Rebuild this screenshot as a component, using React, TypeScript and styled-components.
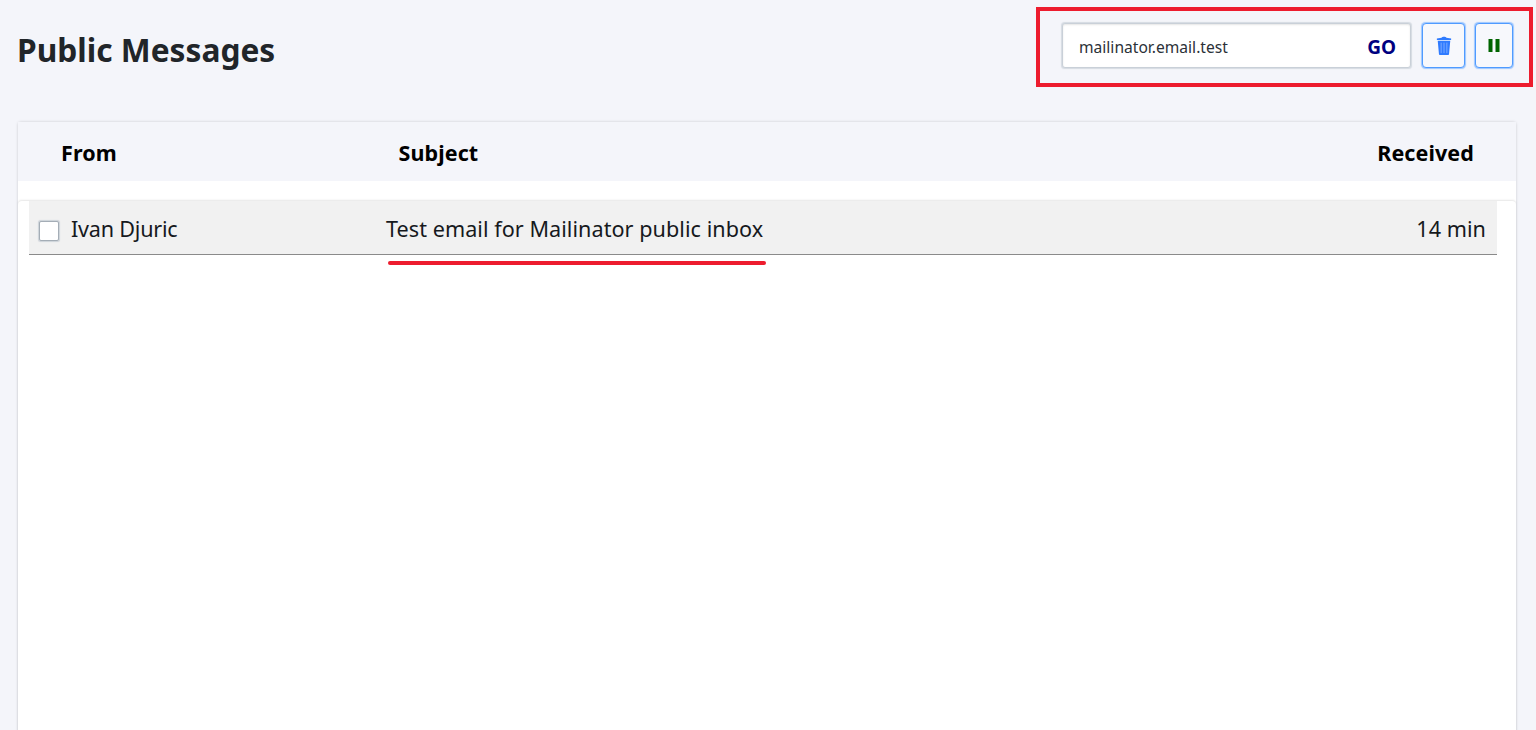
import React from "react";
import styled, { createGlobalStyle } from "styled-components";

const Global = createGlobalStyle`
  html, body { margin: 0; padding: 0; height: 730px; overflow: hidden; background: #f4f5fa; }
  * { box-sizing: border-box; }
`;

const Page = styled.div`
  height: 730px;
  overflow: hidden;
  background: #f4f5fa;
  font-family: "Noto Sans", "Open Sans", "Liberation Sans", sans-serif;
  color: #212529;
`;

const TopBar = styled.header`
  display: flex;
  align-items: flex-start;
  justify-content: space-between;
  padding: 7px 3px 0 17px;
  height: 122px;
`;

const Title = styled.h1`
  margin: 23px 0 0;
  font-size: 31.7px;
  line-height: 40px;
  font-weight: 700;
`;

const Highlight = styled.div`
  display: flex;
  align-items: flex-start;
  width: 497px;
  height: 80px;
  padding: 12px 0 0 22px;
  border: 4px solid #ed1c2e;
`;

const SearchBox = styled.div`
  display: flex;
  align-items: center;
  justify-content: space-between;
  width: 349px;
  height: 45px;
  padding: 2px 14px 0 16px;
  margin-right: 11px;
  background: #fff;
  border: 1px solid #c9d0d8;
  border-radius: 3px;
  box-shadow: inset 0 1px 2px rgba(0, 0, 0, 0.1), 0 0 1px 0.5px #d5dbe2;
`;

const SearchText = styled.span`
  font-size: 15.6px;
  color: #2b3138;
`;

const Go = styled.span`
  font-size: 19px;
  font-weight: 700;
  color: #000080;
`;

const IconButton = styled.button<{ $w: number }>`
  display: flex;
  align-items: center;
  justify-content: center;
  width: ${(p) => p.$w}px;
  height: 45px;
  margin-right: 10px;
  padding: 0;
  background: #f7f8fc;
  border: 1px solid #4f9bff;
  border-radius: 4px;
  box-shadow: 0 0 1px 0.5px #9cc6ff;
`;

const Card = styled.section`
  position: relative;
  margin: 0 20px 0 18px;
  height: 620px;
  background: #fff;
  border-radius: 3px 3px 0 0;
  box-shadow: 0 0 3px rgba(0, 0, 0, 0.18);
`;

const HeadRow = styled.div`
  display: grid;
  grid-template-columns: 337.5px 1fr auto;
  align-items: center;
  height: 59px;
  padding: 2px 42px 0 43px;
  background: #f4f5fa;
  font-size: 21.5px;
  font-weight: 700;
  letter-spacing: 0.1px;
  color: #000;
`;

const Spacer = styled.div`
  height: 20px;
  background: #fff;
`;

const Body = styled.div`
  position: relative;
  height: 540px;
  padding: 0 19px 0 11px;
  background: #fff;
  border-radius: 4px 4px 0 0;
  box-shadow: 0 -1px 2px rgba(0, 0, 0, 0.1);
`;

const Row = styled.div`
  display: grid;
  grid-template-columns: 347px 1fr auto;
  align-items: center;
  height: 54px;
  padding: 2px 11px 0 10px;
  background: #f1f1f1;
  border-bottom: 1px solid #8a8a8a;
  font-size: 21.6px;
  letter-spacing: 0.05px;
  color: #16191d;
`;

const Sender = styled.div`
  display: flex;
  align-items: center;
  gap: 12px;
`;

const SenderName = styled.span`
  letter-spacing: -0.22px;
`;

const Check = styled.span`
  width: 20px;
  height: 20px;
  margin-top: 5px;
  background: #fff;
  border: 1px solid #a4adb6;
  border-radius: 2px;
  box-shadow: 0 0 1px 0.5px #cdd3d9;
`;

const Underline = styled.div`
  position: absolute;
  left: 370px;
  top: 60px;
  width: 378px;
  height: 4px;
  background: #ed1c2e;
  border-radius: 2px;
`;

export default function App() {
  return (
    <Page>
      <Global />
      <TopBar>
        <Title>Public Messages</Title>
        <Highlight>
          <SearchBox>
            <SearchText>mailinator.email.test</SearchText>
            <Go>GO</Go>
          </SearchBox>
          <IconButton $w={43} aria-label="Delete">
            <svg width="16" height="19" viewBox="0 0 16 20">
              <path d="M5.500 1.800C6 .5 10 .5 10.500 1.800L15.500 2.500V4.200H.5V2.500z" fill="#2f7bff" />
              <path d="M1.400 5h13.200l-1.300 14.200a.9.9 0 0 1-.9.8H3.600a.9.9 0 0 1-.9-.8z" fill="#2f7bff" />
              <path d="M5 7v11M8 7v11M11 7v11" stroke="#7eacff" strokeWidth="1" />
            </svg>
          </IconButton>
          <IconButton $w={38} aria-label="Pause">
            <svg width="12" height="13" viewBox="0 0 12 13">
              <rect x="0.500" y="0" width="4" height="13" fill="#006400" />
              <rect x="7.500" y="0" width="4" height="13" fill="#006400" />
            </svg>
          </IconButton>
        </Highlight>
      </TopBar>
      <Card>
        <HeadRow>
          <span>From</span>
          <span>Subject</span>
          <span>Received</span>
        </HeadRow>
        <Spacer />
        <Body>
          <Row>
            <Sender>
              <Check />
              <SenderName>Ivan Djuric</SenderName>
            </Sender>
            <span>Test email for Mailinator public inbox</span>
            <span>14 min</span>
          </Row>
          <Underline />
        </Body>
      </Card>
    </Page>
  );
}
